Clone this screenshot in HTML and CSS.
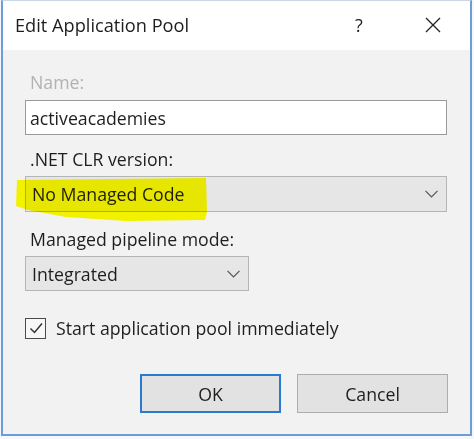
FILE: index.html
```html
<!DOCTYPE html>
<html>
<head>
<meta charset="utf-8">
<link rel="stylesheet" href="styles.css">
</head>
<body>
<div class="window">
  <div class="titlebar">
    <span class="title">Edit Application Pool</span>
    <span class="help">?</span>
    <span class="close"><svg width="16" height="16" viewBox="0 0 16 16"><path d="M1 1 L15 15 M15 1 L1 15" stroke="#222" stroke-width="1.3" fill="none"/></svg></span>
  </div>
  <div class="content">
    <div class="lbl disabled">Name:</div>
    <div class="textbox">activeacademies</div>
    <div class="lbl">.NET CLR version:</div>
    <div class="select wide"><span>No Managed Code</span><svg class="chev" width="13" height="8" viewBox="0 0 13 8"><path d="M0.5 0.8 L6.5 6.8 L12.5 0.8" stroke="#555" stroke-width="1.2" fill="none"/></svg></div>
    <div class="lbl">Managed pipeline mode:</div>
    <div class="select narrow"><span>Integrated</span><svg class="chev" width="13" height="8" viewBox="0 0 13 8"><path d="M0.5 0.8 L6.5 6.8 L12.5 0.8" stroke="#555" stroke-width="1.2" fill="none"/></svg></div>
    <div class="check">
      <span class="box"><svg width="16" height="16" viewBox="0 0 16 16"><path d="M2.5 8.5 L6.5 12.5 L14 3.5" stroke="#333" stroke-width="1.5" fill="none"/></svg></span>
      <span>Start application pool immediately</span>
    </div>
    <div class="buttons">
      <div class="btn ok">OK</div>
      <div class="btn">Cancel</div>
    </div>
  </div>
  <svg class="highlight" width="192" height="44" viewBox="0 0 192 44"><path d="M1 2 L190 0 L191 34 L189 42 L110 43 L50 39 L12 32 L0 28 Z" fill="#ffff00"/></svg>
</div>
</body>
</html>
```
FILE: styles.css
```css
* { box-sizing: border-box; }
html, body { margin: 0; padding: 0; }
body {
  background: #f4f7fb;
  width: 474px;
  height: 439px;
  overflow: hidden;
  font-family: "Open Sans", "Noto Sans", sans-serif;
  color: #1e1e1e;
}
.window {
  position: relative;
  margin-left: 1px;
  width: 471px;
  height: 436px;
  border-left: 2px solid #6e9cd6;
  border-right: 2px solid #6e9cd6;
  border-bottom: 2px solid #6e9cd6;
  border-top: 1px solid #c9d6e6;
  background: #f2f2f2;
}
.titlebar {
  height: 49px;
  background: #ffffff;
  display: flex;
  align-items: center;
  padding-left: 12px;
}
.title { font-size: 18.2px; flex: 1; padding-bottom: 2px; }
.help { font-size: 18px; width: 70px; padding-bottom: 2px; }
.close { width: 45px; display: flex; padding-bottom: 2px; }
.content {
  padding: 20px 22px 0 22px;
  display: flex;
  flex-direction: column;
  align-items: flex-start;
}
.lbl { font-size: 17.7px; line-height: 24px; padding-left: 5px; }
.lbl.disabled { color: #b2b2b2; }
.textbox {
  margin-top: 6px;
  width: 422px;
  height: 35px;
  border: 1px solid #9a9a9a;
  background: #fff;
  font-size: 17.7px;
  display: flex;
  align-items: center;
  padding-left: 4px;
  margin-bottom: 12px;
}
.select {
  margin-top: 5px;
  height: 36px;
  border: 1px solid #b5b5b5;
  background: #e6e6e6;
  font-size: 17.7px;
  display: flex;
  align-items: center;
  justify-content: space-between;
  padding: 0 8px 0 6px;
}
.select.wide { width: 422px; margin-bottom: 15px; }
.select.narrow { width: 224px; height: 35px; }
.check {
  margin-top: 25px;
  display: flex;
  align-items: center;
  font-size: 17.7px;
  line-height: 24px;
  gap: 10px;
}
.box {
  width: 21px;
  height: 21px;
  border: 1.5px solid #4a4a4a;
  background: #f7f7f7;
  display: flex;
  align-items: center;
  justify-content: center;
}
.buttons {
  margin-top: 34px;
  align-self: stretch;
  display: flex;
  justify-content: flex-end;
  gap: 16px;
}
.btn {
  width: 151px;
  height: 39px;
  border: 1px solid #adadad;
  background: #e2e2e2;
  font-size: 17.7px;
  display: flex;
  align-items: center;
  justify-content: center;
}
.btn.ok {
  width: 141px;
  border: 2px solid #2a7ad2;
}
.highlight {
  position: absolute;
  left: 13px;
  top: 177px;
  mix-blend-mode: multiply;
  pointer-events: none;
}
```
